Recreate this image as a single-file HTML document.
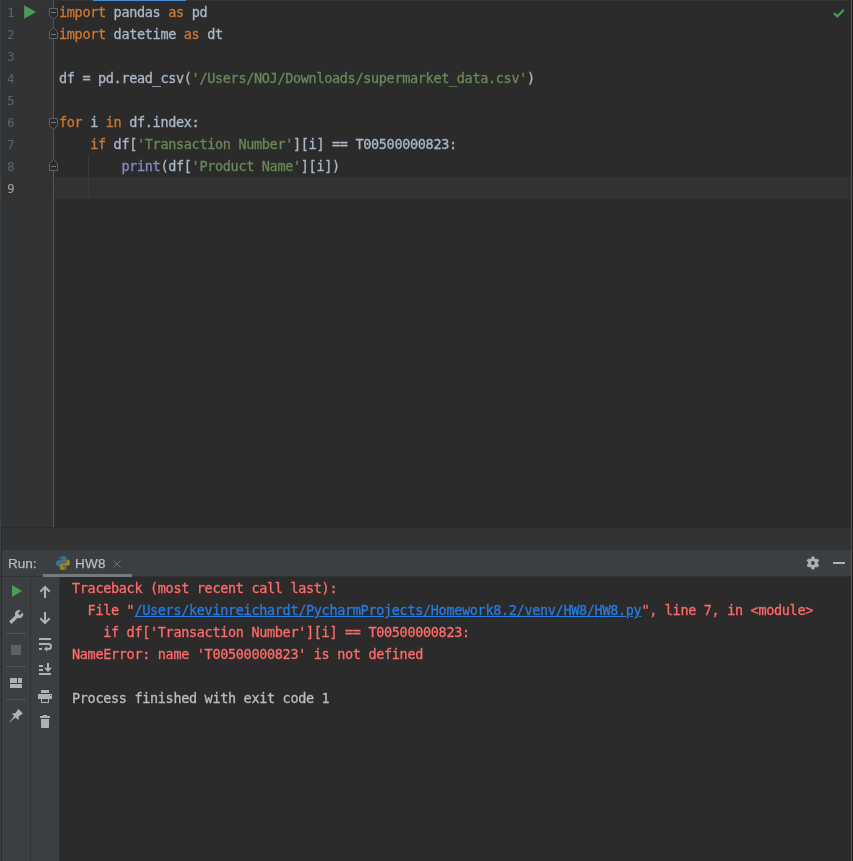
<!DOCTYPE html>
<html lang="en">
<head>
<meta charset="utf-8">
<title>HW8.py - PyCharm</title>
<style>
html,body{margin:0;padding:0;}
body{width:853px;height:861px;overflow:hidden;background:#2b2b2b;position:relative;
  font-family:"Liberation Sans","DejaVu Sans",sans-serif;font-size:13px;color:#bbbbbb;}
.abs{position:absolute;}
/* ---------- editor ---------- */
#topstrip{left:0;top:0;width:853px;height:1px;background:#353535;}
#tabline{left:93px;top:0;width:93px;height:1px;background:#4a8dd6;}
#leftedge{left:0;top:0;width:1px;height:861px;background:#3c3f41;}
#leftedge2{left:1px;top:528px;width:1px;height:333px;background:#2b2b2b;}
#rightedge{left:851px;top:0;width:1px;height:861px;background:#555555;}
#rightedge2{left:852px;top:0;width:1px;height:861px;background:#1f1f1f;}
#gutter{left:1px;top:1px;width:52px;height:526px;background:#313335;}
#gutterline{left:53px;top:1px;width:1px;height:526px;background:#555555;}
#caretrow{left:1px;top:177px;width:850px;height:22px;background:#323232;}
#indent{left:88px;top:155px;width:1px;height:44px;background:#393939;}
.mono{font-family:"DejaVu Sans Mono","Liberation Mono",monospace;font-size:13.5px;letter-spacing:-0.3277px;white-space:pre;margin-top:0px;-webkit-text-stroke:0.3px currentColor;will-change:transform;}
.ln{left:1px;width:21px;height:22px;line-height:22px;text-align:left;padding-left:6px;color:#606366;font-size:12px;margin-top:1px;padding-left:6.3px;-webkit-text-stroke:0.1px currentColor;}
.cl{left:59px;height:22px;line-height:22px;color:#a9b7c6;}
.k{color:#cc7832;}
.s{color:#6a8759;}
.b{color:#8888c6;}
/* ---------- run tool window ---------- */
#midline{left:1px;top:527px;width:850px;height:1px;background:#2b2b2b;}
#midstrip{left:1px;top:528px;width:850px;height:22px;background:#313335;}
#runhdr{left:2px;top:550px;width:849px;height:26px;background:#3c3f41;}
#hdrline{left:2px;top:576px;width:849px;height:1px;background:#323232;}
#tabul{left:43px;top:574px;width:89px;height:3px;background:#747a80;}
#tb1{left:2px;top:577px;width:28px;height:284px;background:#3c3f41;}
#tbsep{left:30px;top:577px;width:1px;height:284px;background:#323232;}
#tb2{left:31px;top:577px;width:28px;height:284px;background:#3c3f41;}
#tbsep2{left:59px;top:577px;width:1px;height:284px;background:#323232;}
.hsep{left:6px;width:20px;height:1px;background:#515151;}
.ui{font-family:"Liberation Sans","DejaVu Sans",sans-serif;font-size:13.5px;color:#bbbbbb;line-height:26px;height:26px;white-space:pre;-webkit-text-stroke:0.25px currentColor;will-change:transform;}
.co{left:72px;height:22px;line-height:22px;color:#bbbbbb;}
.e{color:#ff6b68;}
.lnk{color:#287bde;text-decoration:underline;}
svg{position:absolute;left:0;top:0;overflow:visible;}
</style>
</head>
<body>
<!-- editor chrome -->
<div class="abs" id="gutter"></div>
<div class="abs" id="caretrow"></div>
<div class="abs" id="gutterline"></div>
<div class="abs" id="indent"></div>
<div class="abs" id="topstrip"></div>
<div class="abs" id="tabline"></div>

<!-- line numbers -->
<div class="abs mono ln" style="top:1px">1</div>
<div class="abs mono ln" style="top:23px">2</div>
<div class="abs mono ln" style="top:45px">3</div>
<div class="abs mono ln" style="top:67px">4</div>
<div class="abs mono ln" style="top:89px">5</div>
<div class="abs mono ln" style="top:111px">6</div>
<div class="abs mono ln" style="top:133px">7</div>
<div class="abs mono ln" style="top:155px">8</div>
<div class="abs mono ln" style="top:177px;color:#a4a3a3">9</div>

<!-- code -->
<div class="abs mono cl" style="top:1px"><span class="k">import</span> pandas <span class="k">as</span> pd</div>
<div class="abs mono cl" style="top:23px"><span class="k">import</span> datetime <span class="k">as</span> dt</div>
<div class="abs mono cl" style="top:67px">df = pd.read_csv(<span class="s">'/Users/NOJ/Downloads/supermarket_data.csv'</span>)</div>
<div class="abs mono cl" style="top:111px"><span class="k">for</span> i <span class="k">in</span> df.index:</div>
<div class="abs mono cl" style="top:133px">    <span class="k">if</span> df[<span class="s">'Transaction Number'</span>][i] == T00500000823:</div>
<div class="abs mono cl" style="top:155px">        <span class="b">print</span>(df[<span class="s">'Product Name'</span>][i])</div>

<!-- run tool window chrome -->
<div class="abs" id="midline"></div>
<div class="abs" id="midstrip"></div>
<div class="abs" id="runhdr"></div>
<div class="abs" id="hdrline"></div>
<div class="abs" id="tb1"></div>
<div class="abs" id="tbsep"></div>
<div class="abs" id="tb2"></div>
<div class="abs" id="tbsep2"></div>
<div class="abs" id="tabul"></div>
<div class="abs hsep" style="top:633px"></div>
<div class="abs hsep" style="top:666px"></div>
<div class="abs hsep" style="top:699px"></div>

<div class="abs ui" style="left:8px;top:550.5px">Run:</div>
<div class="abs ui" style="left:75px;top:550.5px;letter-spacing:0.2px">HW8</div>

<!-- console -->
<div class="abs mono co e" style="top:577px">Traceback (most recent call last):</div>
<div class="abs mono co e" style="top:599px">  File "<span class="lnk">/Users/kevinreichardt/PycharmProjects/Homework8.2/venv/HW8/HW8.py</span>", line 7, in &lt;module&gt;</div>
<div class="abs mono co e" style="top:621px">    if df['Transaction Number'][i] == T00500000823:</div>
<div class="abs mono co e" style="top:643px">NameError: name 'T00500000823' is not defined</div>
<div class="abs mono co" style="top:687px">Process finished with exit code 1</div>

<!-- ICONS -->
<svg id="icons" width="853" height="861" viewBox="0 0 853 861">
<!-- gutter run arrow -->
<polygon points="24.1,5.3 24.1,18.7 36,12" fill="#499c54"/>
<!-- fold markers -->
<g fill="#2b2b2b" stroke="#5e6163" stroke-width="1">
<path d="M49.5 8.5H57.5V15.5L53.5 19.5L49.5 15.5Z"/>
<path d="M53.5 27.5L57.5 31.5V38.5H49.5V31.5Z"/>
<path d="M49.5 118.5H57.5V125.5L53.5 129.5L49.5 125.5Z"/>
<path d="M53.5 159.5L57.5 163.5V170.5H49.5V163.5Z"/>
</g>
<g fill="#73777a">
<rect x="51" y="12" width="5" height="1"/>
<rect x="51" y="34" width="5" height="1"/>
<rect x="51" y="122" width="5" height="1"/>
<rect x="51" y="166" width="5" height="1"/>
</g>
<!-- inspection OK checkmark -->
<path d="M833.9 13L837.3 16.4L843.7 9.8" fill="none" stroke="#499c54" stroke-width="2.2"/>
<!-- python file icon -->
<g transform="translate(56,556)">
<path fill="#3b7494" d="M6.9 0C5 0 3.7 .8 3.7 2.1V3.6H7.1V4.2H2.2C.8 4.2 0 5.3 0 7C0 8.7 .8 10.4 2.2 10.4H3.5V8.7C3.5 7.6 4.4 6.8 5.5 6.8H8.6C9.6 6.8 10.3 6 10.3 5V2.1C10.3 .8 8.8 0 6.9 0Z"/>
<path fill="#9a8323" d="M7.1 14C9 14 10.3 13.2 10.3 11.9V10.4H6.9V9.8H11.8C13.2 9.8 14 8.7 14 7C14 5.3 13.2 3.6 11.8 3.6H10.5V5.3C10.5 6.4 9.6 7.2 8.5 7.2H5.4C4.4 7.2 3.7 8 3.7 9V11.9C3.7 13.2 5.2 14 7.1 14Z"/>
<circle cx="5.2" cy="1.8" r=".65" fill="#3c3f41"/>
<circle cx="8.8" cy="12.2" r=".65" fill="#3c3f41"/>
</g>
<!-- tab close -->
<path d="M113.5 560.5L120.5 567.5M120.5 560.5L113.5 567.5" stroke="#6e7072" stroke-width="1" fill="none"/>
<!-- gear -->
<g transform="translate(812.9,563)">
<path d="M-1.90 -4.00L-1.10 -6.25L1.10 -6.25L1.90 -4.00L2.51 -3.65L4.86 -4.08L5.96 -2.17L4.41 -0.35L4.41 0.35L5.96 2.17L4.86 4.08L2.51 3.65L1.90 4.00L1.10 6.25L-1.10 6.25L-1.90 4.00L-2.51 3.65L-4.86 4.08L-5.96 2.17L-4.41 0.35L-4.41 -0.35L-5.96 -2.17L-4.86 -4.08L-2.51 -3.65Z" fill="#afb1b3" stroke="#afb1b3" stroke-width=".4" stroke-linejoin="round"/>
<circle r="4.45" fill="#afb1b3"/>
<circle r="1.9" fill="#3c3f41"/>
</g>
<!-- hide (minimize) -->
<rect x="833" y="562" width="12" height="2" fill="#afb1b3"/>
<!-- left toolbar: rerun -->
<polygon points="12,585 12,597 22,591" fill="#499c54"/>
<!-- wrench -->
<path d="M10.3 622.8L17.2 615.9" stroke="#afb1b3" stroke-width="3.4" fill="none"/>
<g transform="translate(19.1,614.1) rotate(-45)">
<circle r="4.15" fill="#afb1b3"/>
<path d="M-.3 -1.35H3L6 -2.4V2.4L3 1.35H-.3Z" fill="#3c3f41"/>
</g>
<!-- stop (disabled) -->
<rect x="11" y="645" width="10" height="10" fill="#5c5e60"/>
<!-- layout -->
<g fill="#afb1b3">
<rect x="10" y="678" width="7" height="5"/>
<rect x="18" y="678" width="4" height="5"/>
<rect x="10" y="684" width="12" height="4"/>
</g>
<!-- pin -->
<path fill="#afb1b3" d="M18.4 709.1L22.9 713.6L18.7 716.4L18.7 719.9L15.3 717.5L8.8 723L14.2 716L11.8 713.6L15.3 713.3Z"/>
<!-- right toolbar: up / down -->
<g fill="none" stroke="#afb1b3" stroke-width="2">
<path d="M45 598V587.5M40.3 591.7L45 587L49.7 591.7"/>
<path d="M45 612V622.5M40.3 618.3L45 623L49.7 618.3"/>
</g>
<!-- soft wrap -->
<g fill="#afb1b3">
<rect x="39" y="638" width="12" height="2"/>
<rect x="39" y="648" width="3" height="2"/>
<polygon points="44,649 47.2,646.2 47.2,651.8"/>
</g>
<path d="M39 644H48.5a2.5 2.5 0 0 1 0 5H47" fill="none" stroke="#afb1b3" stroke-width="2"/>
<!-- scroll to end -->
<g fill="#afb1b3">
<rect x="39" y="665" width="4" height="2"/>
<rect x="39" y="669" width="4" height="2"/>
<rect x="39" y="673" width="12" height="2"/>
<rect x="47" y="663" width="2" height="5.5"/>
<polygon points="44,667.8 52,667.8 48,672"/>
</g>
<!-- print -->
<g fill="#afb1b3">
<rect x="41" y="690" width="8" height="3"/>
<rect x="38" y="694" width="14" height="5"/>
<path d="M41 699h8v4h-8zM42 699v3h6v-3z" fill-rule="evenodd"/>
</g>
<rect x="50" y="695" width="1" height="1" fill="#3c3f41"/>
<!-- trash -->
<g fill="#afb1b3">
<rect x="43" y="715" width="4" height="1"/>
<rect x="40" y="716" width="10" height="2"/>
<path d="M41 719h8v8a1 1 0 0 1 -1 1h-6a1 1 0 0 1 -1 -1z"/>
</g>
</svg>

<!-- window edges -->
<div class="abs" id="leftedge"></div>
<div class="abs" id="leftedge2"></div>
<div class="abs" id="rightedge"></div>
<div class="abs" id="rightedge2"></div>
</body>
</html>
